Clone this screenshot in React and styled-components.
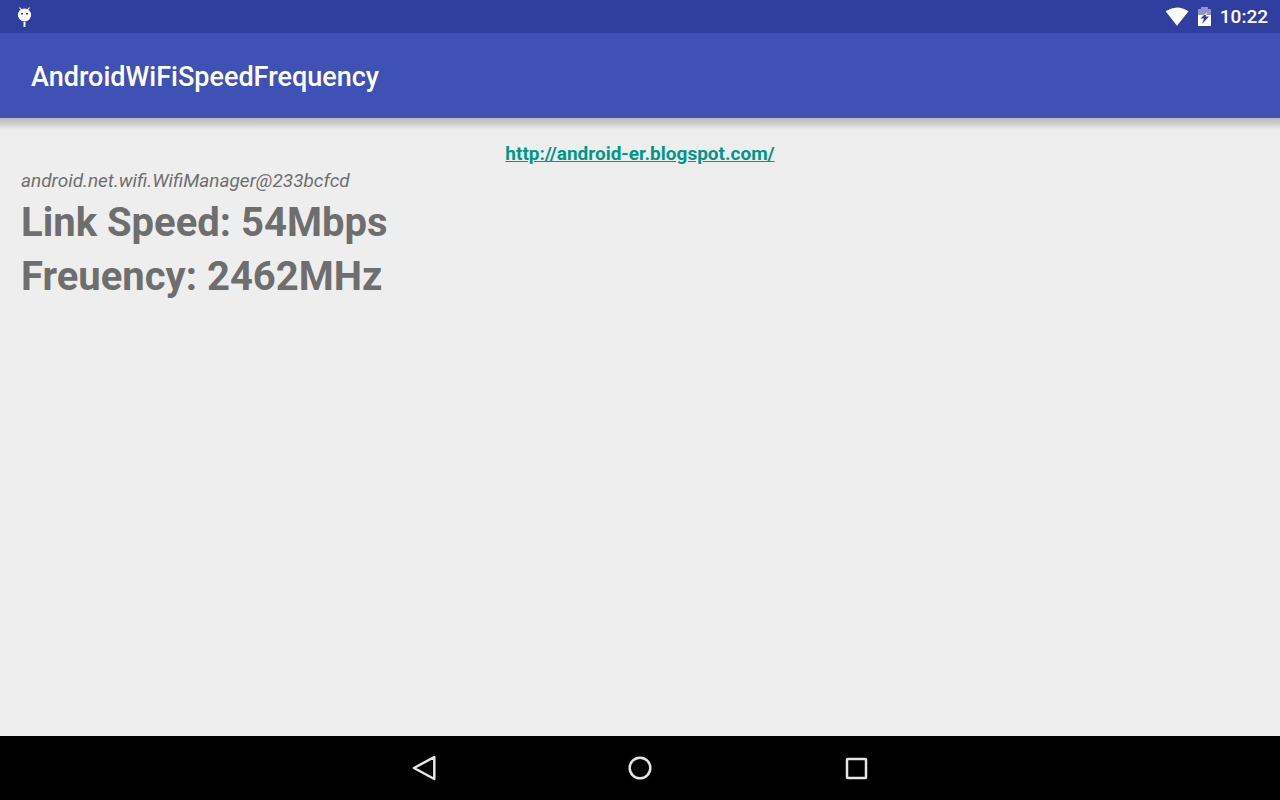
import React from "react";
import styled, { createGlobalStyle } from "styled-components";

function App() {
    return (
        <StScreen>
            <GlobalStyle />
            <StStatusBar>
                <svg width="16" height="22" viewBox="0 0 16 22" fill="#fff" aria-hidden="true">
                    <path d="M3.500 1.500l2 2.500M13.500 1.500l-2 2.500" stroke="#fff" strokeWidth="1.200" />
                    <ellipse cx="8.500" cy="9" rx="6.600" ry="6.400" />
                    <rect x="5" y="7" width="2" height="1.500" fill="#303f9f" />
                    <rect x="10" y="7" width="2" height="1.500" fill="#303f9f" />
                    <rect x="7.500" y="16" width="2" height="5" rx="0.5" />
                </svg>
                <StIndicators>
                    <svg width="24" height="20" viewBox="0 0 24 20" fill="#fff" aria-hidden="true">
                        <path d="M-.4 4.200Q11-3.400 22.600 4.200L11 18.800z" />
                    </svg>
                    <svg width="14" height="20" viewBox="0 0 14 20" fill="#fff" aria-hidden="true">
                        <path d="M3 0h7v2h3v6H0V2h3z" opacity="0.45" />
                        <path d="M0 8h13v11H0z" />
                        <path d="M9.500 4.500L2.500 11.500h3.500L4 17L11 9.500H7.500z" fill="#303f9f" />
                        <path d="M9.500 4.500L6 8h2.200z" fill="#fff" />
                    </svg>
                    <time>10:22</time>
                </StIndicators>
            </StStatusBar>
            <StAppBar>
                <h1>AndroidWiFiSpeedFrequency</h1>
            </StAppBar>
            <StContent>
                <StLink href="http://android-er.blogspot.com/">
                    http://android-er.blogspot.com/
                </StLink>
                <StManager>android.net.wifi.WifiManager@233bcfcd</StManager>
                <StReading>Link Speed: 54Mbps</StReading>
                <StReading>Freuency: 2462MHz</StReading>
            </StContent>
            <StNavBar>
                <StNavButton type="button" aria-label="Back">
                    <svg width="28" height="28" viewBox="0 0 28 28">
                        <path d="M24.300 3v22L4 14z" />
                    </svg>
                </StNavButton>
                <StNavButton type="button" aria-label="Home">
                    <svg width="28" height="28" viewBox="0 0 28 28">
                        <circle cx="14" cy="14" r="10.300" />
                    </svg>
                </StNavButton>
                <StNavButton type="button" aria-label="Recent apps">
                    <svg width="28" height="28" viewBox="0 0 28 28">
                        <rect x="5" y="5" width="19" height="19" rx="0.5" />
                    </svg>
                </StNavButton>
            </StNavBar>
        </StScreen>
    );
}

const GlobalStyle = createGlobalStyle`
    body {
        margin: 0;
        font-family: Roboto, sans-serif;
    }
    * {
        box-sizing: border-box;
    }
`;

const StScreen = styled.div`
    min-height: 100vh;
    display: flex;
    flex-direction: column;
    background-color: #eeeeee;
`;

const StStatusBar = styled.div`
    height: 33px;
    padding: 0 12px 0 16px;
    display: flex;
    justify-content: space-between;
    align-items: center;
    background-color: #303f9f;
`;

const StIndicators = styled.div`
    display: flex;
    align-items: center;
    gap: 8px;
    color: white;
    font-size: 19px;
    line-height: 26px;
    font-weight: 500;
`;

const StAppBar = styled.header`
    height: 85px;
    padding: 2px 31px 0;
    display: flex;
    align-items: center;
    background-color: #3f51b5;
    h1 {
        margin: 0;
        color: white;
        font-size: 27px;
        font-weight: 500;
    }
`;

const StContent = styled.main`
    flex: 1;
    display: flex;
    flex-direction: column;
    padding: 22px 21px;
    color: #6e6e6e;
    /* shadow of the app bar */
    background: linear-gradient(#bcbcbc, #cacaca 5px, #eeeeee 12px);
`;

const StLink = styled.a`
    align-self: center;
    color: #009688;
    font-size: 19px;
    line-height: 28px;
    font-weight: 700;
`;

const StManager = styled.p`
    margin: 0 0 2px;
    font-size: 19px;
    line-height: 26px;
    font-style: italic;
`;

const StReading = styled.p`
    margin: 0;
    font-size: 40px;
    line-height: 54px;
    font-weight: 700;
`;

const StNavBar = styled.nav`
    height: 64px;
    display: flex;
    justify-content: center;
    background-color: black;
`;

const StNavButton = styled.button`
    width: 216px;
    border: none;
    padding: 0;
    display: flex;
    justify-content: center;
    align-items: center;
    background: none;
    cursor: pointer;
    svg {
        fill: none;
        stroke: #e6e6e6;
        stroke-width: 2.5px;
        stroke-linejoin: round;
    }
`;

export default App;
